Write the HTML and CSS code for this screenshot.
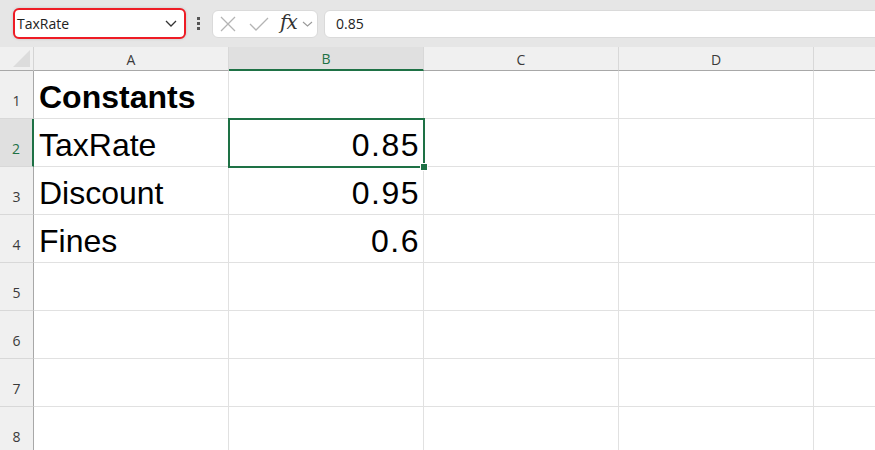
FILE: index.html
```html
<!DOCTYPE html>
<html>
<head>
<meta charset="utf-8">
<link rel="stylesheet" href="styles.css">
</head>
<body>
<div class="app">
  <div class="toolbar">
    <div class="namebox">
      <span class="namebox-text">TaxRate</span>
      <svg class="chev" width="12" height="7" viewBox="0 0 12 7"><path d="M1 1 L6 6 L11 1" fill="none" stroke="#333" stroke-width="1.3"/></svg>
    </div>
    <div class="dots"><span></span><span></span><span></span></div>
    <div class="fbtns">
      <svg class="ico-x" width="16" height="16" viewBox="0 0 16 16"><path d="M1 1 L15 15 M15 1 L1 15" stroke="#b4b4b4" stroke-width="1.3" fill="none"/></svg>
      <svg class="ico-check" width="20" height="16" viewBox="0 0 20 16"><path d="M1 8 L7 14 L19 2" stroke="#b4b4b4" stroke-width="1.3" fill="none"/></svg>
      <span class="fx">fx</span>
      <svg class="chev-sm" width="11" height="6" viewBox="0 0 11 6"><path d="M1 1 L5.5 5 L10 1" fill="none" stroke="#9a9a9a" stroke-width="1.1"/></svg>
    </div>
    <div class="formula">0.85</div>
  </div>
  <div class="grid">
    <div class="corner"><span class="tri"></span></div>
    <div class="ch">A</div>
    <div class="ch sel">B</div>
    <div class="ch">C</div>
    <div class="ch">D</div>
    <div class="ch"></div>

    <div class="rh">1</div>
    <div class="c bold">Constants</div>
    <div class="c"></div><div class="c"></div><div class="c"></div><div class="c"></div>

    <div class="rh sel">2</div>
    <div class="c">TaxRate</div>
    <div class="c num active">0.85<span class="handle"></span></div>
    <div class="c"></div><div class="c"></div><div class="c"></div>

    <div class="rh">3</div>
    <div class="c">Discount</div>
    <div class="c num">0.95</div>
    <div class="c"></div><div class="c"></div><div class="c"></div>

    <div class="rh">4</div>
    <div class="c">Fines</div>
    <div class="c num">0.6</div>
    <div class="c"></div><div class="c"></div><div class="c"></div>

    <div class="rh">5</div>
    <div class="c"></div><div class="c"></div><div class="c"></div><div class="c"></div><div class="c"></div>
    <div class="rh">6</div>
    <div class="c"></div><div class="c"></div><div class="c"></div><div class="c"></div><div class="c"></div>
    <div class="rh">7</div>
    <div class="c"></div><div class="c"></div><div class="c"></div><div class="c"></div><div class="c"></div>
    <div class="rh">8</div>
    <div class="c"></div><div class="c"></div><div class="c"></div><div class="c"></div><div class="c"></div>
  </div>
</div>
</body>
</html>
```

FILE: styles.css
```css
* { box-sizing: border-box; }
html, body { margin: 0; padding: 0; }
body {
  width: 875px;
  height: 450px;
  overflow: hidden;
  background: #ffffff;
  font-family: "Liberation Sans", Arial, sans-serif;
}
.app { width: 875px; overflow: hidden; }

.toolbar {
  height: 47px;
  background: #e6e6e6;
  display: flex;
  align-items: center;
  padding-left: 13px;
}
.namebox {
  width: 173px;
  height: 31px;
  margin-top: -1px;
  background: #ffffff;
  border: 2px solid #ee1c25;
  border-radius: 6px;
  display: flex;
  align-items: center;
  justify-content: space-between;
  padding: 0 7px 0 2px;
  box-shadow: 0 0 3px rgba(0,0,0,0.15);
}
.namebox-text { font-size: 14px; color: #222; font-family: "Open Sans", "Liberation Sans", sans-serif; }
.chev { display: block; }
.dots {
  margin-left: 10px;
  width: 5px;
  display: flex;
  flex-direction: column;
  align-items: center;
  gap: 2px;
}
.dots span { width: 3px; height: 3px; background: #555; display: block; }
.fbtns {
  margin-left: 11px;
  width: 106px;
  height: 28px;
  background: #ffffff;
  border: 1px solid #dadada;
  border-radius: 6px;
  display: flex;
  align-items: center;
  padding-left: 7px;
}
.ico-x { display: block; }
.ico-check { display: block; margin-left: 13px; }
.fx {
  margin-left: 11px;
  font-family: "DejaVu Serif", "Liberation Serif", serif;
  font-style: italic;
  font-size: 20px;
  color: #333;
  line-height: 1;
  margin-top: -3px;
  letter-spacing: -1px;
}
.chev-sm { display: block; margin-left: 5px; }
.formula {
  margin-left: 6px;
  flex: 1;
  margin-right: -20px;
  height: 28px;
  background: #ffffff;
  border: 1px solid #dadada;
  border-radius: 6px;
  font-size: 14px;
  color: #222;
  font-family: "Open Sans", "Liberation Sans", sans-serif;
  display: flex;
  align-items: center;
  padding-left: 11px;
}

.grid {
  display: grid;
  grid-template-columns: 34px 195px 195px 195px 195px 195px;
  grid-template-rows: 24px repeat(8, 48px);
}
.corner {
  background: #f0f0f0;
  border-right: 1px solid #d4d4d4;
  border-bottom: 1px solid #a8a8a8;
  position: relative;
}
.tri {
  position: absolute;
  right: 3px;
  bottom: 3px;
  width: 0;
  height: 0;
  border-left: 17px solid transparent;
  border-bottom: 17px solid #dcdcdc;
}
.ch {
  background: #f0f0f0;
  border-right: 1px solid #d8d8d8;
  border-bottom: 1px solid #a8a8a8;
  display: flex;
  align-items: center;
  justify-content: center;
  font-size: 14px;
  color: #3a3a3a;
  font-family: "Open Sans", "Liberation Sans", sans-serif;
  padding-top: 1px;
}
.ch.sel {
  background: #e0e0e0;
  color: #1e7145;
  border-bottom: 2px solid #1e7145;
}
.rh {
  background: #f0f0f0;
  border-right: 1px solid #a8a8a8;
  border-bottom: 1px solid #d8d8d8;
  display: flex;
  align-items: flex-end;
  justify-content: center;
  padding-bottom: 8px;
  font-size: 14px;
  color: #3a3a3a;
  font-family: "Open Sans", "Liberation Sans", sans-serif;
}
.rh.sel {
  background: #e0e0e0;
  color: #1e7145;
  border-right: 2px solid #1e7145;
}
.c {
  border-right: 1px solid #e1e1e1;
  border-bottom: 1px solid #e1e1e1;
  font-size: 32px;
  line-height: 32px;
  color: #000;
  display: flex;
  align-items: flex-end;
  padding: 0 4px 5px 5px;
  white-space: nowrap;
}
.c.bold { font-weight: bold; }
.c.num { justify-content: flex-end; letter-spacing: 1.5px; padding-right: 3px; }
.c.active {
  position: relative;
  outline: 2px solid #1e7145;
  outline-offset: -1px;
  z-index: 1;
}
.handle {
  position: absolute;
  right: -5px;
  bottom: -5px;
  width: 8px;
  height: 8px;
  background: #1e7145;
  border: 1px solid #ffffff;
}
```
